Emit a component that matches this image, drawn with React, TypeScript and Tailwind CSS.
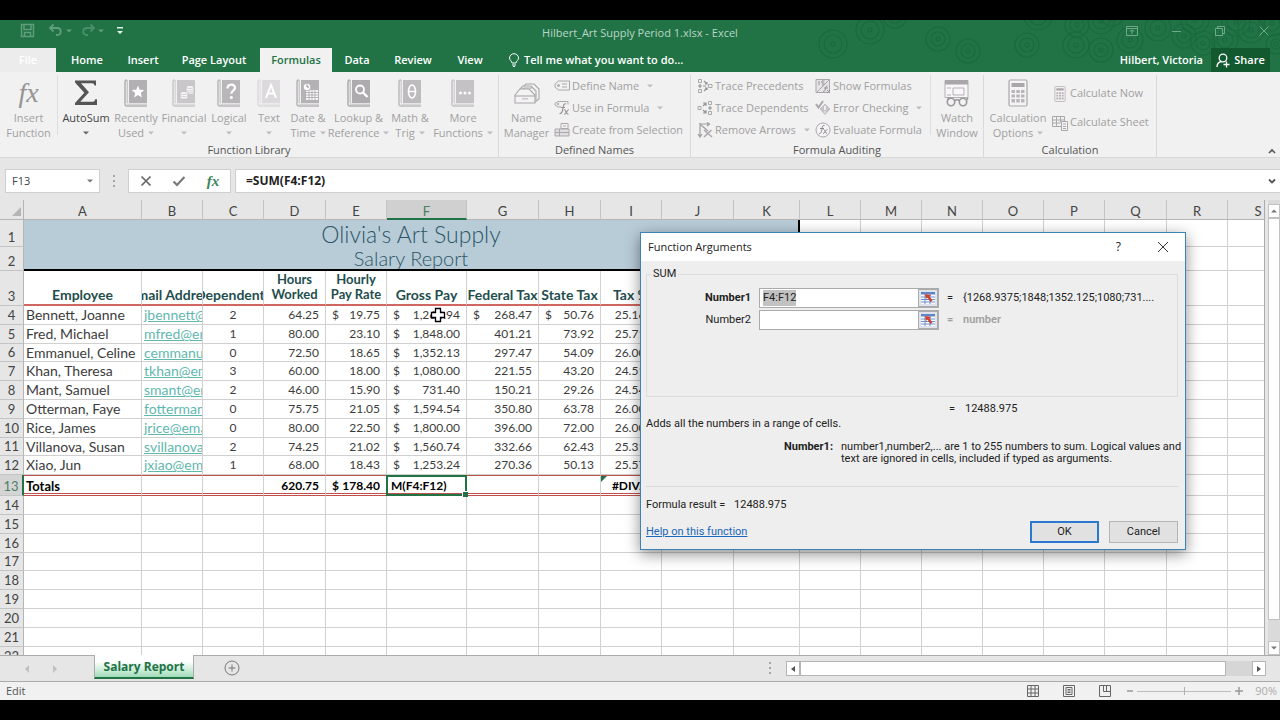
import { useEffect, useRef, useState } from 'react';
import type { ReactNode } from 'react';

const COLUMNS = [
  { id: 'A', width: 118 },
  { id: 'B', width: 61 },
  { id: 'C', width: 61 },
  { id: 'D', width: 62 },
  { id: 'E', width: 61 },
  { id: 'F', width: 80 },
  { id: 'G', width: 72 },
  { id: 'H', width: 62 },
  { id: 'I', width: 61 },
  { id: 'J', width: 72 },
  { id: 'K', width: 66 },
  { id: 'L', width: 61 },
  { id: 'M', width: 61 },
  { id: 'N', width: 61 },
  { id: 'O', width: 61 },
  { id: 'P', width: 61 },
  { id: 'Q', width: 62 },
  { id: 'R', width: 61 },
  { id: 'S', width: 61 },
];
const TABLE_WIDTH = COLUMNS.reduce((sum, c) => sum + c.width, 24);
const AFTER_K = COLUMNS.slice(11);

interface Employee {
  row: number;
  height: number;
  name: string;
  email: string;
  dependents: number;
  hours: string;
  rate: string;
  gross: string;
  federal: string;
  state: string;
  tax: string;
}

const EMPLOYEES: Employee[] = [
  { row: 4, height: 19, name: 'Bennett, Joanne', email: 'jbennett@email.com', dependents: 2, hours: '64.25', rate: '19.75', gross: '1,268.94', federal: '268.47', state: '50.76', tax: '25.16%' },
  { row: 5, height: 19, name: 'Fred, Michael', email: 'mfred@email.com', dependents: 1, hours: '80.00', rate: '23.10', gross: '1,848.00', federal: '401.21', state: '73.92', tax: '25.71%' },
  { row: 6, height: 18, name: 'Emmanuel, Celine', email: 'cemmanuel@email.com', dependents: 0, hours: '72.50', rate: '18.65', gross: '1,352.13', federal: '297.47', state: '54.09', tax: '26.00%' },
  { row: 7, height: 19, name: 'Khan, Theresa', email: 'tkhan@email.com', dependents: 3, hours: '60.00', rate: '18.00', gross: '1,080.00', federal: '221.55', state: '43.20', tax: '24.51%' },
  { row: 8, height: 19, name: 'Mant, Samuel', email: 'smant@email.com', dependents: 2, hours: '46.00', rate: '15.90', gross: '731.40', federal: '150.21', state: '29.26', tax: '24.54%' },
  { row: 9, height: 19, name: 'Otterman, Faye', email: 'fotterman@email.com', dependents: 0, hours: '75.75', rate: '21.05', gross: '1,594.54', federal: '350.80', state: '63.78', tax: '26.00%' },
  { row: 10, height: 19, name: 'Rice, James', email: 'jrice@email.com', dependents: 0, hours: '80.00', rate: '22.50', gross: '1,800.00', federal: '396.00', state: '72.00', tax: '26.00%' },
  { row: 11, height: 18, name: 'Villanova, Susan', email: 'svillanova@email.com', dependents: 2, hours: '74.25', rate: '21.02', gross: '1,560.74', federal: '332.66', state: '62.43', tax: '25.31%' },
  { row: 12, height: 19, name: 'Xiao, Jun', email: 'jxiao@email.com', dependents: 1, hours: '68.00', rate: '18.43', gross: '1,253.24', federal: '270.36', state: '50.13', tax: '25.57%' },
];

const EMPTY_ROWS = [
  { row: 14, height: 19 },
  { row: 15, height: 19 },
  { row: 16, height: 19 },
  { row: 17, height: 18 },
  { row: 18, height: 19 },
  { row: 19, height: 19 },
  { row: 20, height: 19 },
  { row: 21, height: 19 },
  { row: 22, height: 19 },
];

const CELL = 'border-r border-b border-[#d0d0d0] p-0';
// double rule under the totals: the cell's own border plus an inset line
const TOTAL_CELL = 'border-t border-r border-b border-[#c0504d] border-r-[#d0d0d0] p-0 shadow-[inset_0_-1px_0_#fff,inset_0_-2px_0_#c0504d]';

// ---------- icons ----------

function Caret({ className = 'text-[#bdbdbd]' }: { className?: string }) {
  return (
    <svg viewBox="0 0 6 4" className={'inline-block h-1 w-1.5 shrink-0 ' + className} fill="currentColor">
      <path d="M0 0.5h6L3 3.5z" />
    </svg>
  );
}

function Book({ fill = '#b3b0b3', children }: { fill?: string; children: ReactNode }) {
  return (
    <svg viewBox="0 0 24 28" className="h-7 w-6">
      <path d="M1 24.500V3a2 2 0 0 1 2-2M1 24.500A2 2 0 0 0 3 27H23" fill="none" stroke={fill} strokeWidth="1.500" />
      <path d="M2.500 1h1.500v23H2.500z" fill={fill} opacity="0.6" />
      <path d="M5 1h18v23H5z" fill={fill} />
      <path d="M3 25.200H23" stroke={fill} strokeWidth="0.700" />
      {children}
    </svg>
  );
}

const StarBook = () => (
  <Book>
    <path d="M14 6.500l1.700 4.300 4.600.3-3.500 2.900 1.100 4.500-3.900-2.500-3.900 2.500 1.100-4.500-3.500-2.900 4.600-.3z" fill="#fff" />
  </Book>
);
const FinancialBook = () => (
  <Book fill="#c9c7c9">
    <g fill="#f7f7f7" stroke="#b8b5b8" strokeWidth="0.600">
      <path d="M14 8v6c0 2 8 2 8 0V8z" />
      <ellipse cx="18" cy="8" rx="4" ry="1.500" />
      <path d="M14 10.500c0 2 8 2 8 0M14 12.500c0 2 8 2 8 0" />
      <path d="M8 14v4.500c0 2 8 2 8 0V14z" />
      <ellipse cx="12" cy="14" rx="4" ry="1.500" />
      <path d="M8 16.300c0 2 8 2 8 0" />
    </g>
  </Book>
);
const LogicalBook = () => (
  <Book fill="#b9b6b9">
    <path d="M10.500 9.500c0-5 7.500-5 7.500-.8 0 3-3.700 3-3.700 6" fill="none" stroke="#fff" strokeWidth="2.200" />
    <circle cx="14.300" cy="18.500" r="1.500" fill="#fff" />
  </Book>
);
const TextBook = () => (
  <Book fill="#dcdadc">
    <path d="M9 19l5-13 5 13M10.800 14.500h6.400" fill="none" stroke="#fff" strokeWidth="2" />
  </Book>
);
const DateBook = () => (
  <Book fill="#b5b2b5">
    <path d="M10 11h12v10H10z" fill="#f7f7f7" />
    <path d="M10 13.500h12M10 16h12M10 18.500h12M13 11v10M16 11v10M19 11v10" stroke="#aaa7aa" strokeWidth="0.800" />
    <circle cx="11" cy="8" r="3.800" fill="#fff" stroke="#aaa7aa" strokeWidth="0.800" />
    <path d="M11 5.500V8h2" fill="none" stroke="#8c898c" />
  </Book>
);
const LookupBook = () => (
  <Book fill="#aeabae">
    <circle cx="13" cy="10.500" r="4" fill="none" stroke="#fff" strokeWidth="1.800" />
    <path d="M16 13.500l4.500 4.500" stroke="#fff" strokeWidth="2.400" />
  </Book>
);
const MathBook = () => (
  <Book fill="#bebbbe">
    <ellipse cx="14" cy="12.500" rx="3.500" ry="6.500" fill="none" stroke="#fff" strokeWidth="1.600" />
    <path d="M10.500 12.500h7" stroke="#fff" strokeWidth="1.400" />
  </Book>
);
const MoreBook = () => (
  <Book fill="#c4c2c4">
    <g fill="#fff">
      <circle cx="9.500" cy="14" r="1.500" />
      <circle cx="14" cy="14" r="1.500" />
      <circle cx="18.500" cy="14" r="1.500" />
    </g>
  </Book>
);
const Fx = () => <span className="font-['Liberation_Serif',serif] text-[28px] leading-7 text-[#949494] italic">fx</span>;
const Sigma = () => (
  <svg viewBox="0 0 24 28" className="h-7 w-6">
    <path d="M1 1.500h21v5h-1.500c-.3-1.600-1-2.300-2.800-2.300H7l8 9-8.700 9.600H18c2 0 2.700-.8 3.200-2.600H23V26H1v-2l9.300-10.200L1 3.500z" fill="#555" />
  </svg>
);
const NameManagerIcon = () => (
  <svg viewBox="0 0 26 28" className="h-7 w-6.5" fill="#f3f3f3" stroke="#a9a6a9" strokeWidth="1.100">
    <path d="M9 13V8l3-3h8l5 5v10l-4 3" />
    <path d="M6 15v-5l3-3h8l5 5v9M7 12l3-3h8" />
    <path d="M1 16l5-6h9l6 6v8H1z" />
    <path d="M1 17h20" />
    <path d="M8 19h6v1.500H8z" fill="#c9c7c9" stroke="none" />
  </svg>
);
const WatchIcon = () => (
  <svg viewBox="0 0 28 28" className="h-7 w-7" fill="none" stroke="#b3b0b3">
    <path d="M2 1.500h23v17H2z" fill="#f8f6f8" />
    <path d="M2 1h23v4.500H2z" fill="#aaa7aa" stroke="none" />
    <path d="M10 9h11v7H10zM4 9h4M4 16h4" />
    <g stroke="#9a979a" strokeWidth="1.600">
      <circle cx="8" cy="23" r="3.700" fill="#f3f3f3" />
      <circle cx="20" cy="23" r="3.700" fill="#f3f3f3" />
      <path d="M11.500 21.500q2.500-1.500 5 0M4.500 21l1.500-3M23.500 21L25 19" />
    </g>
  </svg>
);
function Calculator({ className }: { className: string }) {
  return (
    <svg viewBox="0 0 20 28" className={className}>
      <rect x="1" y="1" width="18" height="26" rx="1.500" fill="#f5f3f5" stroke="#a9a6a9" strokeWidth="1.200" />
      <path d="M3.500 4h13v4h-13z" fill="#aaa7aa" />
      <path
        d="M3.500 11h3.500v3H3.500zM8.300 11h3.500v3H8.300zM13 11h3.500v3H13zM3.500 15.500h3.500v3H3.500zM8.300 15.500h3.500v3H8.300zM13 15.500h3.500v3H13zM3.500 20h3.500v3.500H3.500zM8.300 20h3.500v3.500H8.300zM13 20h3.500v3.500H13z"
        fill="#b9b6b9"
      />
    </svg>
  );
}

function SmallIcon({ children }: { children: ReactNode }) {
  return (
    <svg viewBox="0 0 16 16" className="h-4 w-4 shrink-0" fill="none" stroke="#aba8ab">
      {children}
    </svg>
  );
}
const TagIcon = () => (
  <SmallIcon>
    <path d="M4.500 3h11v9h-11L1 9V6z" />
    <circle cx="4.500" cy="7.500" r="1" fill="#aba8ab" />
    <path d="M8 6h5M8 9h5" />
  </SmallIcon>
);
const UseFormulaIcon = () => (
  <SmallIcon>
    <path d="M7 7H4L1 5V3.500L4 1.500h10v3" />
    <circle cx="4" cy="4" r=".8" />
    <path d="M12 4c-2-1-2.500 1-3 4s-1 6-3.500 5.500M7 7.500h4M10 9.500c2 0 2 5 4.500 5M15 9.500c-2 0-3 5-5 5" stroke="#979497" strokeWidth="1.200" />
  </SmallIcon>
);
const CreateSelIcon = () => (
  <SmallIcon>
    <path d="M1 7h14v7H1zM5.500 7v7M1 10.500h14" fill="#e0dee0" />
    <path d="M7 1.500h7v5H7zM9 4h3" fill="#f5f3f5" />
  </SmallIcon>
);
const PrecedentsIcon = () => (
  <SmallIcon>
    <path d="M1.500 1.500h3v3h-3zM1.500 11.500h3v3h-3zM11.500 6.500h3.500v3h-3.500z" />
    <path d="M1 8h4M3 6v4M7 3l3 3M7 13l3-3M6 8h3M10 4v2H8M10 12v-2H8" stroke="#979497" strokeWidth="1.200" />
  </SmallIcon>
);
const DependentsIcon = () => (
  <SmallIcon>
    <path d="M11.500 1.500h3v3h-3zM11.500 11.500h3v3h-3zM1 6.500h3v3H1z" />
    <path d="M11 8h4M13 6v4M6 6l3-3M6 10l3 3M6 3h3v3M6 13h3v-3" stroke="#979497" strokeWidth="1.200" />
  </SmallIcon>
);
const RemoveArrowsIcon = () => (
  <SmallIcon>
    <path d="M3 1v13M1 12l2 3 2-3M3 2h9M10 .5L12.500 2 10 4M4 3l7 6" stroke="#9f9c9f" strokeWidth="1.200" />
    <path d="M7 8l8 7M14.500 8L7 15" strokeWidth="1.500" />
  </SmallIcon>
);
const ShowFormulasIcon = () => (
  <SmallIcon>
    <path d="M1 1.500h13.500v13H1zM1 15L15 1" fill="#e6e4e6" />
    <path d="M4 3v4M9.500 3H7v2c3-.5 3 2.500 0 2M12.500 8c-2-.5-1.500 2-2 3s-1 3-2.500 2.500M9 10h4M12 12l3 3M15 12l-3 3" stroke="#979497" />
  </SmallIcon>
);
const ErrorCheckIcon = () => (
  <SmallIcon>
    <path d="M10 4l5 5-5 5.500-5-5.500z" fill="#c4c2c4" stroke="#c4c2c4" />
    <path d="M10 6v4M10 11.500v1" stroke="#fff" strokeWidth="1.500" />
    <path d="M1 4l2.500 3.500L8 1" strokeWidth="2" />
  </SmallIcon>
);
const EvaluateIcon = () => (
  <SmallIcon>
    <circle cx="8" cy="8" r="7" fill="#f5f3f5" />
    <path d="M9.500 3.500c-2-.7-2 1-2.500 3.500s-1 5-3 4.500M5 6.500h4M8.500 7.500c1.500 0 2 4 3.500 4M12.500 7.500c-2 0-2.500 4-4.500 4" stroke="#8c898c" />
  </SmallIcon>
);
const CalcSheetIcon = () => (
  <SmallIcon>
    <path d="M.5 1.500h12v10H.5zM.5 5h12M.5 8h8M4.500 1.500v10M8.500 1.500v6" />
    <path d="M9.500 6.500h6v9h-6z" fill="#f5f3f5" />
    <path d="M11 9h3M11 11.500h3M11 13.500h3" />
  </SmallIcon>
);

function RangeIcon() {
  return (
    <svg viewBox="0 0 16 14" className="h-3.5 w-4">
      <path d="M1 1h14v12H1z" fill="#fff" />
      <path d="M1 1h14v2.500H1z" fill="#5f83c4" />
      <path d="M1 6h14M1 8.500h14M1 11h14M5 1v12M10 1v12" stroke="#6f8fc9" />
      <path d="M5 3l1 5 1.500-1.500 3 4.500 2-1.500-3-4L11 4z" fill="#d2422c" />
    </svg>
  );
}

const RINGS = [
  [833, 24, 14], [870, 10, 14], [895, -4, 12], [938, 19, 12], [968, 31, 12], [1027, 25, 12], [1038, -4, 14],
  [1077, 5, 12], [1076, 25, 13], [1101, 30, 12], [1101, 1, 13], [1130, 20, 13], [1112, -6, 12], [1158, 8, 13],
  [1184, 16, 12], [1195, 0, 14], [1203, 23, 12], [1225, 20, 13], [1236, 2, 14], [1251, 10, 13], [1272, 3, 13], [1276, 24, 10],
];

function Rings() {
  return (
    <svg viewBox="800 0 480 52" className="pointer-events-none absolute top-0 right-0 h-[52px] w-[480px]" fill="none" stroke="#1b693e" strokeWidth="1.200" aria-hidden="true">
      {RINGS.map(([x, y, r]) => (
        <g key={`${x}-${y}`}>
          <circle cx={x} cy={y} r={r} />
          <circle cx={x} cy={y} r={r - 5} />
          <circle cx={x} cy={y} r={2} />
        </g>
      ))}
    </svg>
  );
}

// ---------- title bar and tabs ----------

function TitleBar() {
  return (
    <div className="relative grid h-7 grid-cols-3 items-center text-[#6fa98a]">
      <div className="flex items-center pb-1.5 pl-5">
        <button type="button" aria-label="Save" className="h-4 w-4">
          <svg viewBox="0 0 16 16" fill="none" stroke="#5f9d7b" strokeWidth="1.500">
            <path d="M1.500 1.500h12v12h-12zM4 1.500v5h7v-5M4.500 13.500v-4h6v4" />
          </svg>
        </button>
        <button type="button" aria-label="Undo" className="ml-3 h-4 w-4">
          <svg viewBox="0 0 16 16" fill="none" stroke="#5f9d7b" strokeWidth="1.800">
            <path d="M5.500 1.500L2 5l3.500 3.500M2 5h7c5 0 5 7 0 7H8" />
          </svg>
        </button>
        <span className="ml-0.5 flex"><Caret className="text-[#5f9d7b]" /></span>
        <button type="button" aria-label="Redo" className="ml-2 h-4 w-4">
          <svg viewBox="0 0 16 16" fill="none" stroke="#4b9069" strokeWidth="1.800">
            <path d="M10.500 1.500L14 5l-3.500 3.500M14 5H7c-5 0-5 7 0 7h1" />
          </svg>
        </button>
        <span className="ml-0.5 flex"><Caret className="text-[#5f9d7b]" /></span>
        <button type="button" aria-label="Customize Quick Access Toolbar" className="ml-3 h-2 w-2">
          <svg viewBox="0 0 8 8" fill="#e4f0e9">
            <path d="M1 0h6v1.500H1zM1 4h6L4 7z" />
          </svg>
        </button>
      </div>
      <h1 className="pb-0.5 text-center text-[11px] whitespace-nowrap text-[#b9d6c6]">Hilbert_Art Supply Period 1.xlsx - Excel</h1>
      <div className="flex items-center justify-end gap-8 pr-2.5 pb-1.5">
        <button type="button" aria-label="Ribbon display options" className="h-3 w-3">
          <svg viewBox="0 0 12 12" fill="none" stroke="currentColor"><path d="M.5 1.500h11v9H.5zM.5 3.500h11M6 9V5M4 6.500L6 5l2 1.500" /></svg>
        </button>
        <button type="button" aria-label="Minimize" className="h-3 w-3">
          <svg viewBox="0 0 12 12" stroke="currentColor"><path d="M2 6.500h9" /></svg>
        </button>
        <button type="button" aria-label="Restore" className="h-3 w-3">
          <svg viewBox="0 0 12 12" fill="none" stroke="currentColor"><path d="M1.500 3.500h7v7h-7zM3.500 3.500v-2h7v7h-2" /></svg>
        </button>
        <button type="button" aria-label="Close" className="h-3 w-3">
          <svg viewBox="0 0 12 12" stroke="currentColor"><path d="M1.500 1.500l9 9M10.500 1.500l-9 9" /></svg>
        </button>
      </div>
    </div>
  );
}

const TABS = [
  { label: 'Home', className: 'w-[62px] text-white' },
  { label: 'Insert', className: 'w-[50px] text-white' },
  { label: 'Page Layout', className: 'w-[92px] text-white' },
  { label: 'Formulas', className: 'w-[72px] bg-[#f1f1f1] text-[#217346]' },
  { label: 'Data', className: 'w-[50px] text-white' },
  { label: 'Review', className: 'w-[62px] text-white' },
  { label: 'View', className: 'w-[52px] text-white' },
];

function TabStrip() {
  return (
    <div className="relative flex h-6 items-stretch text-[11px] font-semibold">
      <button type="button" className="w-14 bg-[#ececec] text-white">File</button>
      {TABS.map((t) => (
        <button key={t.label} type="button" className={'whitespace-nowrap ' + t.className}>
          {t.label}
        </button>
      ))}
      <button type="button" className="ml-3 flex items-center gap-1 whitespace-nowrap text-white">
        <svg viewBox="0 0 12 14" className="h-3.5 w-3" fill="none" stroke="#fff">
          <path d="M4 10c0-2-2.500-2.500-2.500-5a4.500 4.300 0 0 1 9 0c0 2.500-2.500 3-2.500 5zM4 12h4M5 13.500h2" />
        </svg>
        Tell me what you want to do...
      </button>
      <div className="ml-auto flex items-center gap-2 pr-2.5 text-white">
        <span className="whitespace-nowrap">Hilbert, Victoria</span>
        <button type="button" className="flex h-full w-[59px] items-center justify-center gap-1 bg-[#13592f]">
          <svg viewBox="0 0 14 15" className="h-[15px] w-3.5" fill="none" stroke="#fff" strokeWidth="1.300">
            <circle cx="7" cy="5" r="3.800" />
            <path d="M1 14c0-3.500 2-5 4.500-5.500M10.500 8.500v6M7.500 11.500h6" />
          </svg>
          Share
        </button>
      </div>
    </div>
  );
}

// ---------- ribbon ----------

function BigButton({ icon, lines, width, caret, active }: { icon: ReactNode; lines: [string, string?]; width: string; caret?: boolean; active?: boolean }) {
  return (
    <button type="button" className={'flex shrink-0 flex-col items-center whitespace-nowrap ' + width + (active ? ' text-[#444]' : ' text-[#a19fa1]')}>
      <span className="flex h-[35px] items-center">{icon}</span>
      <span className="leading-[15px]">{lines[0]}</span>
      <span className="flex items-center justify-center gap-1 leading-[15px]">
        {lines[1] ?? ''}
        {caret && <Caret className={lines[1] ? 'text-[#bdbdbd]' : active ? 'mt-1.5 text-[#666]' : 'mt-1.5 text-[#bdbdbd]'} />}
      </span>
    </button>
  );
}

function SmallButton({ icon, label, caret }: { icon: ReactNode; label: string; caret?: boolean }) {
  return (
    <button type="button" className="flex items-center gap-0.5 whitespace-nowrap text-[#a19fa1]">
      {icon}
      {label}
      {caret && <span className="ml-1.5 flex"><Caret /></span>}
    </button>
  );
}

function Group({ label, width, children }: { label: string; width: string; children: ReactNode }) {
  return (
    <section aria-label={label} className={'flex shrink-0 flex-col border-r border-[#dadada] ' + width}>
      <div className="mb-0.5 flex h-[66px]">{children}</div>
      <p className="text-center leading-[14px] text-[#555]">{label}</p>
    </section>
  );
}

function Ribbon() {
  return (
    <div className="flex h-[86px] items-stretch border-b border-[#d8d8d8] bg-[#f1f1f1] pt-[3px] text-[11px]">
      <Group label="Function Library" width="w-[499px]">
        <BigButton icon={<Fx />} lines={['Insert', 'Function']} width="w-[57px]" />
        <div className="h-[60px] w-px bg-[#dedede]" />
        <BigButton icon={<Sigma />} lines={['AutoSum']} width="w-14" caret active />
        <BigButton icon={<StarBook />} lines={['Recently', 'Used']} width="w-11" caret />
        <BigButton icon={<FinancialBook />} lines={['Financial']} width="w-[52px]" caret />
        <BigButton icon={<LogicalBook />} lines={['Logical']} width="w-[38px]" caret />
        <BigButton icon={<TextBook />} lines={['Text']} width="w-[42px]" caret />
        <BigButton icon={<DateBook />} lines={['Date &', 'Time']} width="w-9" caret />
        <BigButton icon={<LookupBook />} lines={['Lookup &', 'Reference']} width="w-[65px]" caret />
        <BigButton icon={<MathBook />} lines={['Math &', 'Trig']} width="w-[38px]" caret />
        <BigButton icon={<MoreBook />} lines={['More', 'Functions']} width="w-[68px]" caret />
      </Group>
      <Group label="Defined Names" width="w-48">
        <BigButton icon={<NameManagerIcon />} lines={['Name', 'Manager']} width="w-[55px]" />
        <div className="flex flex-col justify-around">
          <SmallButton icon={<TagIcon />} label="Define Name" caret />
          <SmallButton icon={<UseFormulaIcon />} label="Use in Formula" caret />
          <SmallButton icon={<CreateSelIcon />} label="Create from Selection" />
        </div>
      </Group>
      <Group label="Formula Auditing" width="w-[293px]">
        <div className="flex w-[124px] flex-col justify-around pl-1.5">
          <SmallButton icon={<PrecedentsIcon />} label="Trace Precedents" />
          <SmallButton icon={<DependentsIcon />} label="Trace Dependents" />
          <SmallButton icon={<RemoveArrowsIcon />} label="Remove Arrows" caret />
        </div>
        <div className="flex w-[115px] flex-col justify-around">
          <SmallButton icon={<ShowFormulasIcon />} label="Show Formulas" />
          <SmallButton icon={<ErrorCheckIcon />} label="Error Checking" caret />
          <SmallButton icon={<EvaluateIcon />} label="Evaluate Formula" />
        </div>
        <div className="h-[60px] w-px bg-[#dedede]" />
        <BigButton icon={<WatchIcon />} lines={['Watch', 'Window']} width="w-[52px]" />
      </Group>
      <Group label="Calculation" width="w-[173px]">
        <BigButton icon={<Calculator className="h-7 w-5" />} lines={['Calculation', 'Options']} width="w-[68px]" caret />
        <div className="flex flex-col justify-around py-1">
          <SmallButton icon={<Calculator className="h-4 w-4" />} label="Calculate Now" />
          <SmallButton icon={<CalcSheetIcon />} label="Calculate Sheet" />
        </div>
      </Group>
      <button type="button" aria-label="Collapse the ribbon" className="mt-auto mr-1 mb-0.5 ml-auto h-2 w-2">
        <svg viewBox="0 0 8 8" fill="none" stroke="#555" strokeWidth="1.600"><path d="M1 6l3-3 3 3" /></svg>
      </button>
    </div>
  );
}

function FormulaBar() {
  return (
    <div className="flex h-[42px] items-center bg-[#e6e6e6] pt-1 pl-[5px] text-[11px]">
      <div className="flex h-6 w-[95px] items-center border border-[#cfcfcf] bg-white pr-1.5">
        <input aria-label="Name box" defaultValue="F13" className="min-w-0 flex-1 pl-1.5 text-[#444] outline-none" />
        <Caret className="text-[#777]" />
      </div>
      <svg viewBox="0 0 4 12" className="mx-3 h-3 w-1" fill="#a5a5a5"><path d="M1 0h2v2H1zM1 5h2v2H1zM1 10h2v2H1z" /></svg>
      <div className="flex h-6 w-[103px] items-center justify-around border border-[#cfcfcf] bg-white">
        <button type="button" aria-label="Cancel entry" className="h-3 w-3">
          <svg viewBox="0 0 12 12" stroke="#666" strokeWidth="1.700"><path d="M1.500 1.500l9 9M10.500 1.500l-9 9" /></svg>
        </button>
        <button type="button" aria-label="Enter" className="h-3 w-3">
          <svg viewBox="0 0 12 12" fill="none" stroke="#777" strokeWidth="2.200"><path d="M.5 6.500L4 10l7.500-8" /></svg>
        </button>
        <button type="button" aria-label="Insert function" className="font-['Liberation_Serif',serif] text-[15px] leading-4 font-bold text-[#3d8560] italic">fx</button>
      </div>
      <div className="ml-1 flex h-6 flex-1 items-center border border-r-0 border-[#cfcfcf] bg-white pr-1">
        <input aria-label="Formula bar" defaultValue="=SUM(F4:F12)" className="min-w-0 flex-1 pl-2.5 text-[12px] font-bold text-[#222] outline-none" />
        <svg viewBox="0 0 8 8" className="h-2 w-2" fill="none" stroke="#555" strokeWidth="1.800"><path d="M1 2.500l3 3 3-3" /></svg>
      </div>
    </div>
  );
}

// ---------- sheet ----------

function RowHead({ n, selected }: { n: number; selected?: boolean }) {
  return (
    <th
      scope="row"
      className={
        'border-b border-[#c4c4c4] p-0 pb-0.5 text-center align-bottom text-[13px] leading-none font-normal ' +
        (selected ? 'border-r-2 border-r-[#217346] bg-[#d4d4d4] text-[#4c7f63]' : 'border-r border-r-[#b5b5b5] bg-[#e6e6e6] text-[#444]')
      }
    >
      {n}
    </th>
  );
}

function Blanks({ columns }: { columns: { id: string }[] }) {
  return (
    <>
      {columns.map((c) => (
        <td key={c.id} className={CELL} />
      ))}
    </>
  );
}

function Money({ value, sign }: { value: string; sign?: boolean }) {
  return (
    <div className="flex justify-between px-1.5">
      <span>{sign ? '$' : ''}</span>
      <span>{value}</span>
    </div>
  );
}

const HEADINGS = ['Employee', 'Email Address', 'Dependents', 'Hours Worked', 'Hourly Pay Rate', 'Gross Pay', 'Federal Tax', 'State Tax', 'Tax %'];

function Sheet() {
  return (
    <table className="table-fixed border-separate border-spacing-0 font-['Lato',sans-serif] text-[#3c3c3c]" style={{ width: TABLE_WIDTH }}>
      <colgroup>
        <col style={{ width: 24 }} />
        {COLUMNS.map((c) => (
          <col key={c.id} style={{ width: c.width }} />
        ))}
      </colgroup>
      <thead>
        <tr className="h-5 bg-[#e6e6e6] text-[13px]">
          <td className="border-r border-b border-[#b5b5b5] p-0">
            <svg viewBox="0 0 10 10" className="mt-1 ml-auto h-2.5 w-3" fill="#b5b5b5"><path d="M9 0v9H0z" /></svg>
          </td>
          {COLUMNS.map((c) => (
            <th
              key={c.id}
              scope="col"
              className={
                'border-r border-r-[#c4c4c4] p-0 pt-1 leading-none font-normal ' +
                (c.id === 'F' ? 'border-b-2 border-b-[#217346] bg-[#d0d0d0] text-[#4c7f63]' : 'border-b border-b-[#b5b5b5] text-[#444]')
              }
            >
              {c.id}
            </th>
          ))}
        </tr>
      </thead>
      <tbody>
        <tr className="h-[27px]">
          <RowHead n={1} />
          <td colSpan={11} className="border-r-2 border-black bg-[#b8ccd8] p-0 text-center text-[23px] leading-6 font-light text-[#2c5666]">Olivia's Art Supply</td>
          <Blanks columns={AFTER_K} />
        </tr>
        <tr className="h-6">
          <RowHead n={2} />
          <td colSpan={11} className="border-r-2 border-b-2 border-black bg-[#b8ccd8] p-0 text-center text-[20px] leading-5 font-light text-[#2c5666]">Salary Report</td>
          <Blanks columns={AFTER_K} />
        </tr>
        <tr className="h-[35px] text-[13px] text-[#1f4e4e]">
          <RowHead n={3} />
          {HEADINGS.map((h) => (
            <th key={h} scope="col" className="border-r border-b-2 border-r-[#d0d0d0] border-b-[#cf6660] p-0 align-bottom leading-[15px] font-bold">
              <div className="flex justify-center overflow-hidden pb-0.5">
                {h.startsWith('Hour') ? <span className="px-1">{h}</span> : <span className="text-[14px] whitespace-nowrap">{h}</span>}
              </div>
            </th>
          ))}
          <td className="border-r border-b-2 border-r-[#d0d0d0] border-b-[#cf6660]" />
          <td className="border-r border-b-2 border-r-[#d0d0d0] border-b-[#cf6660]" />
          <Blanks columns={AFTER_K} />
        </tr>
        {EMPLOYEES.map((e) => (
          <tr key={e.row} className="text-[12px] leading-4" style={{ height: e.height }}>
            <RowHead n={e.row} />
            <td className={CELL + ' pl-0.5 text-[14px] whitespace-nowrap'}>{e.name}</td>
            <td className={CELL + ' overflow-hidden pl-0.5 text-[14px] whitespace-nowrap'}>
              <a href={'mailto:' + e.email} className="text-[#5fb8b0] underline">{e.email}</a>
            </td>
            <td className={CELL + ' text-center'}>{e.dependents}</td>
            <td className={CELL}><Money value={e.hours} /></td>
            <td className={CELL}><Money value={e.rate} sign={e.row === 4} /></td>
            <td className={CELL}><Money value={e.gross} sign /></td>
            <td className={CELL}><Money value={e.federal} sign={e.row === 4} /></td>
            <td className={CELL}><Money value={e.state} sign={e.row === 4} /></td>
            <td className={CELL}><Money value={e.tax} /></td>
            <Blanks columns={COLUMNS.slice(9)} />
          </tr>
        ))}
        <tr className="h-[21px] text-[12px] leading-4 font-bold text-black">
          <RowHead n={13} selected />
          <td className={TOTAL_CELL + ' pl-0.5 text-[13px]'}>Totals</td>
          <td className={TOTAL_CELL} />
          <td className={TOTAL_CELL} />
          <td className={TOTAL_CELL}><Money value="620.75" /></td>
          <td className={TOTAL_CELL}><Money value="178.40" sign /></td>
          <td className={TOTAL_CELL + ' relative pl-1'}>
            M(F4:F12)
            <span className="absolute -top-px -right-px -bottom-px -left-px border-2 border-[#217346]" />
            <span className="absolute -right-0.5 -bottom-0.5 h-1.5 w-1.5 border-t border-l border-white bg-[#217346]" />
          </td>
          <td className={TOTAL_CELL} />
          <td className={TOTAL_CELL} />
          <td className={TOTAL_CELL + ' relative'}>
            <svg viewBox="0 0 6 6" className="absolute top-0 left-0 h-1.5 w-1.5" fill="#217346"><path d="M0 0h6L0 6z" /></svg>
            <Money value="#DIV/0!" />
          </td>
          <td className={TOTAL_CELL} />
          <td className={TOTAL_CELL} />
          <Blanks columns={AFTER_K} />
        </tr>
        {EMPTY_ROWS.map((r) => (
          <tr key={r.row} style={{ height: r.height }}>
            <RowHead n={r.row} />
            <Blanks columns={COLUMNS} />
          </tr>
        ))}
      </tbody>
    </table>
  );
}

function VerticalScroll() {
  return (
    <div className="flex w-3 shrink-0 flex-col bg-[#dadada] pt-1">
      <button type="button" aria-label="Scroll up" className="flex h-3.5 items-center justify-center border border-[#c2c2c2] bg-white">
        <svg viewBox="0 0 6 4" className="h-1 w-1.5" fill="#777"><path d="M0 3.500h6L3 .5z" /></svg>
      </button>
      <div className="h-[402px] border border-[#c2c2c2] bg-white" />
      <button type="button" aria-label="Scroll down" className="mt-auto flex h-3.5 items-center justify-center border border-[#c2c2c2] bg-white">
        <Caret className="text-[#777]" />
      </button>
    </div>
  );
}

function SheetTabs() {
  return (
    <div className="flex h-[27px] items-start border-t border-b border-[#ababab] bg-[#e6e6e6]">
      <div className="flex h-full w-[94px] items-center gap-[22px] pl-6">
        <svg viewBox="0 0 6 8" className="h-2 w-1.5" fill="#c0c0c0"><path d="M5 0v8L1 4z" /></svg>
        <svg viewBox="0 0 6 8" className="h-2 w-1.5" fill="#c0c0c0"><path d="M1 0v8l4-4z" /></svg>
      </div>
      <button type="button" className="-mt-px h-6 w-[100px] border-x border-b-2 border-x-[#ababab] border-b-[#217346] bg-linear-to-b from-white from-30% to-[#9fdcb9] pt-0.5 text-[12px] leading-5 font-bold whitespace-nowrap text-[#217346]">
        Salary Report
      </button>
      <button type="button" aria-label="New sheet" className="mt-1 ml-[30px] h-4 w-4">
        <svg viewBox="0 0 16 16" fill="none" stroke="#777"><circle cx="8" cy="8" r="7" /><path d="M8 4.500v7M4.500 8h7" /></svg>
      </button>
      <svg viewBox="0 0 4 12" className="mt-1.5 mr-3.5 ml-auto h-3 w-1" fill="#a5a5a5"><path d="M1 0h2v2H1zM1 5h2v2H1zM1 10h2v2H1z" /></svg>
      <div className="mt-[5px] mr-3.5 flex h-[15px] w-[37.5%] bg-[#d6d6d6]">
        <button type="button" aria-label="Scroll left" className="flex w-3.5 items-center justify-center border border-[#b5b5b5] bg-white">
          <svg viewBox="0 0 4 6" className="h-1.5 w-1" fill="#555"><path d="M4 0v6L0 3z" /></svg>
        </button>
        <div className="mr-[26px] flex-1 border border-[#b5b5b5] bg-white" />
        <button type="button" aria-label="Scroll right" className="flex w-3.5 items-center justify-center border border-[#b5b5b5] bg-white">
          <svg viewBox="0 0 4 6" className="h-1.5 w-1" fill="#555"><path d="M0 0v6l4-3z" /></svg>
        </button>
      </div>
    </div>
  );
}

function StatusBar() {
  return (
    <div className="flex h-[18px] items-center bg-[#f1f1f1] pr-[3px] pl-1.5 text-[11px] text-[#555]">
      <span className="mr-auto">Edit</span>
      <button type="button" aria-label="Normal view" className="mr-6 h-3 w-3">
        <svg viewBox="0 0 12 12" fill="none" stroke="#666"><path d="M.5.500h11v11H.5zM4 .5v11M8 .5v11M.5 4h11M.5 8h11" /></svg>
      </button>
      <button type="button" aria-label="Page layout view" className="mr-6 h-3 w-3">
        <svg viewBox="0 0 12 12" fill="none" stroke="#666"><path d="M.5.500h11v11H.5zM3 2.500h6v7H3zM4.500 4.500h3M4.500 6h3M4.500 7.500h3" /></svg>
      </button>
      <button type="button" aria-label="Page break preview" className="mr-4 h-3 w-3">
        <svg viewBox="0 0 12 12" fill="none" stroke="#666"><path d="M.5.500h11v11H.5zM4.500.500v6h7M7.500.500v6" /></svg>
      </button>
      <button type="button" aria-label="Zoom out" className="h-1.5 w-1.5">
        <svg viewBox="0 0 6 6" stroke="#999" strokeWidth="1.500"><path d="M0 3h6" /></svg>
      </button>
      <input
        type="range"
        aria-label="Zoom"
        defaultValue={50}
        className="mx-1 h-2 w-[94px] appearance-none bg-[linear-gradient(#bdbdbd,#bdbdbd)] bg-[length:100%_1px] bg-center bg-no-repeat [&::-webkit-slider-thumb]:h-2 [&::-webkit-slider-thumb]:w-px [&::-webkit-slider-thumb]:appearance-none [&::-webkit-slider-thumb]:bg-[#b0b0b0]"
      />
      <button type="button" aria-label="Zoom in" className="h-2 w-2">
        <svg viewBox="0 0 8 8" stroke="#999" strokeWidth="1.500"><path d="M0 4h8M4 0v8" /></svg>
      </button>
      <span className="w-[34px] text-right text-[#ababab]">90%</span>
    </div>
  );
}

// ---------- dialog ----------

function FunctionArguments() {
  const firstInput = useRef<HTMLInputElement>(null);
  const [number1, setNumber1] = useState('F4:F12');
  const [number2, setNumber2] = useState('');

  useEffect(() => {
    firstInput.current?.focus();
    firstInput.current?.select();
  }, []);

  return (
    <div
      role="dialog"
      aria-label="Function Arguments"
      className="absolute top-[232px] left-1/2 w-[546px] border border-[#3c83b5] bg-[#eee] font-['Roboto',sans-serif] text-[11px] text-[#222] shadow-[0_4px_14px_rgba(0,0,0,0.45)]"
    >
      <div className="flex h-7 items-center bg-white pr-4 pl-[7px] font-['Open_Sans',sans-serif]">
        <h2 className="mr-auto">Function Arguments</h2>
        <button type="button" aria-label="Help" className="mr-9 text-[12px]">?</button>
        <button type="button" aria-label="Close dialog" className="h-3 w-3">
          <svg viewBox="0 0 12 12" stroke="#333"><path d="M1 1l10 10M11 1L1 11" /></svg>
        </button>
      </div>
      <div className="pt-1 pr-[7px] pl-[5px]">
        <fieldset className="h-[132px] border border-[#dcdcdc]">
          <legend className="ml-1 px-0.5 leading-[18px]">SUM</legend>
          <div className="grid grid-cols-[104px_180px_1fr] gap-x-2 gap-y-0.5 pt-[5px]">
            <label htmlFor="number1" className="text-right leading-5 font-bold">Number1</label>
            <div className="flex h-5 border border-[#ababab] bg-white">
              <input
                id="number1"
                ref={firstInput}
                value={number1}
                onChange={(e) => setNumber1(e.target.value)}
                className="min-w-0 flex-1 pl-[3px] outline-none selection:bg-[#c2c2c2] selection:text-[#222]"
              />
              <button type="button" aria-label="Collapse dialog for Number1" className="flex w-5 items-center justify-center border border-[#ababab] bg-[#dfe3ee]"><RangeIcon /></button>
            </div>
            <p className="leading-5 whitespace-pre"><span className="inline-block w-4">=</span>{'{1268.9375;1848;1352.125;1080;731....'}</p>
            <label htmlFor="number2" className="text-right leading-5">Number2</label>
            <div className="flex h-5 border border-[#ababab] bg-white">
              <input id="number2" value={number2} onChange={(e) => setNumber2(e.target.value)} className="min-w-0 flex-1 pl-[3px] outline-none" />
              <button type="button" aria-label="Collapse dialog for Number2" className="flex w-5 items-center justify-center border border-[#ababab] bg-[#dfe3ee]"><RangeIcon /></button>
            </div>
            <p className="leading-5 font-semibold text-[#a0a0a0]"><span className="inline-block w-4">=</span>number</p>
          </div>
        </fieldset>
        <p className="mt-1 pl-[303px] leading-4"><span className="inline-block w-4">=</span>12488.975</p>
        <p className="leading-[14px]">Adds all the numbers in a range of cells.</p>
        <div className="mt-2.5 grid h-[45px] grid-cols-[187px_1fr] gap-2 leading-3">
          <strong className="text-right">Number1:</strong>
          <p className="whitespace-nowrap">
            number1,number2,... are 1 to 255 numbers to sum. Logical values and
            <br />
            text are ignored in cells, included if typed as arguments.
          </p>
        </div>
        <p className="border-t border-[#d9d9d9] pt-2.5 leading-4">
          Formula result = <span className="ml-1.5">12488.975</span>
        </p>
        <div className="mt-2 mb-1.5 flex items-center gap-2.5">
          <a href="#help" className="mr-auto text-[#1a66b8] underline">Help on this function</a>
          <button type="button" className="h-[22px] w-[69px] border-2 border-[#2b78cf] bg-[#e1e1e1]">OK</button>
          <button type="button" className="h-[22px] w-[69px] border border-[#b5b5b5] bg-[#e1e1e1]">Cancel</button>
        </div>
      </div>
    </div>
  );
}

export default function App() {
  return (
    <div className="relative flex h-screen flex-col overflow-hidden bg-black py-5 font-['Open_Sans','Noto_Sans',sans-serif]">
      <header className="relative bg-[#217346]">
        <Rings />
        <TitleBar />
        <TabStrip />
      </header>
      <Ribbon />
      <FormulaBar />
      <main className="flex min-h-0 flex-1 bg-[#e6e6e6]">
        <div className="min-w-0 flex-1 overflow-hidden border-r border-[#ababab] bg-white">
          <Sheet />
        </div>
        <div className="w-[3px]" />
        <VerticalScroll />
      </main>
      <SheetTabs />
      <StatusBar />
      <svg viewBox="0 0 16 16" className="pointer-events-none absolute top-[307px] left-[430px] h-4 w-4" fill="#fff" stroke="#000" strokeWidth="1.300" aria-hidden="true">
        <path d="M5.500 1.500h5v4h4v5h-4v4h-5v-4h-4v-5h4z" />
      </svg>
      <FunctionArguments />
    </div>
  );
}
